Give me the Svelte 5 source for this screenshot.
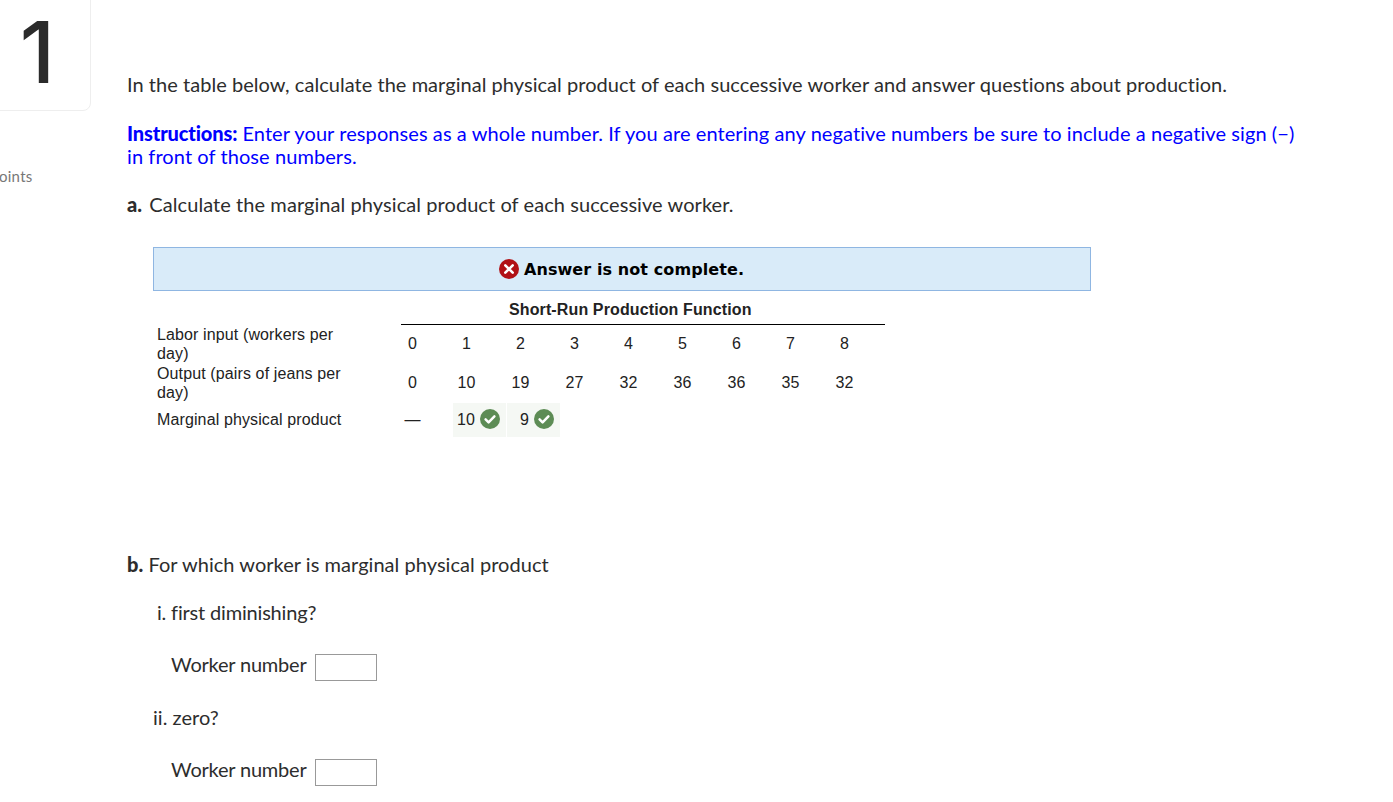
<script>
  const labor = [0, 1, 2, 3, 4, 5, 6, 7, 8];
  const output = [0, 10, 19, 27, 32, 36, 36, 35, 32];
</script>

<div class="page">
  <aside class="side">
    <div class="num-card"><span>1</span></div>
    <div class="points">Points</div>
  </aside>

  <main class="question">
    <p class="intro">In the table below, calculate the marginal physical product of each successive worker and answer questions about production.</p>
    <p class="instructions"><b>Instructions:</b> Enter your responses as a whole number. If you are entering any negative numbers be sure to include a negative sign (−) in front of those numbers.</p>
    <p class="part-a"><b>a.</b> Calculate the marginal physical product of each successive worker.</p>

    <div class="alert">
      <svg class="x-icon" viewBox="0 0 20 20" width="20" height="20">
        <circle cx="10" cy="10" r="10" fill="#b11116" />
        <path d="M6.3 6.3l7.4 7.4M13.7 6.3l-7.4 7.4" stroke="#fff" stroke-width="2.6" stroke-linecap="round" />
      </svg>
      <strong>Answer is not complete.</strong>
    </div>

    <div class="table">
      <div class="caption">Short-Run Production Function</div>
      <div class="rule"></div>

      <div class="label">Labor input (workers per day)</div>
      {#each labor as n}
        <div class="val tall">{n}</div>
      {/each}

      <div class="label">Output (pairs of jeans per day)</div>
      {#each output as n}
        <div class="val tall">{n}</div>
      {/each}

      <div class="label">Marginal physical product</div>
      <div class="val">—</div>
      {#each [10, 9] as n}
        <div class="val answer">
          <span>{n}</span>
          <svg viewBox="0 0 20 20" width="20" height="20">
            <circle cx="10" cy="10" r="10" fill="#5d8c55" />
            <path d="M5.6 10.4l3 3 5.8-6" fill="none" stroke="#fff" stroke-width="2.5" stroke-linecap="round" stroke-linejoin="round" />
          </svg>
        </div>
      {/each}
    </div>

    <p class="part-b"><b>b.</b> For which worker is marginal physical product</p>
    <p class="sub first">i. first diminishing?</p>
    <div class="worker">Worker number <input type="text" /></div>
    <p class="sub second">ii. zero?</p>
    <div class="worker last">Worker number <input type="text" /></div>
  </main>
</div>

<style>
  :global(body) {
    margin: 0;
    background: #fff;
    overflow: hidden;
  }

  .page {
    display: flex;
    width: 1393px;
    height: 802px;
    overflow: hidden;
    font-family: Lato, "Liberation Sans", sans-serif;
    font-size: 20px;
    letter-spacing: 0.04px;
    color: #2d2d2d;
  }

  .side {
    flex: 0 0 127px;
    overflow: hidden;
  }
  .num-card {
    width: 111px;
    height: 121px;
    margin: -10px 0 0 -20px;
    box-sizing: border-box;
    border: 1px solid #eeeeee;
    border-radius: 8px;
    display: flex;
    justify-content: center;
    align-items: center;
    padding: 3px 0 0 4px;
    font-family: Inter, sans-serif;
    font-size: 85px;
    font-weight: 500;
    line-height: 1;
    letter-spacing: 0;
    color: #2b2b2b;
  }
  .points {
    margin: 56px 0 0 -10px;
    font-size: 15px;
    letter-spacing: 0.3px;
    color: #777;
  }

  .question {
    flex: 1;
    padding-right: 90px;
  }
  p {
    margin: 0;
  }
  .intro {
    margin-top: 73px;
    line-height: 23px;
  }
  .instructions {
    margin-top: 26px;
    line-height: 23px;
    letter-spacing: 0.08px;
    color: #0000ff;
  }
  .instructions b {
    letter-spacing: -0.13px;
  }
  .instructions b,
  .part-a b,
  .part-b b {
    font-weight: 900;
  }
  .part-a {
    margin-top: 25px;
    line-height: 23px;
    letter-spacing: 0.07px;
  }
  .part-a b {
    margin-right: 2px;
  }

  .alert {
    margin: 31px 0 0 26px;
    width: 938px;
    height: 44px;
    box-sizing: border-box;
    background: #d9ebf9;
    border: 1px solid #8fb6e2;
    display: flex;
    justify-content: center;
    align-items: center;
    gap: 5px;
    padding-right: 1px;
    font-family: "DejaVu Sans", sans-serif;
    font-size: 16px;
    letter-spacing: 0.09px;
    color: #000;
  }
  .alert strong {
    font-weight: 700;
  }

  .table {
    display: grid;
    grid-template-columns: 228.5px repeat(9, 54px);
    margin-left: 30px;
    font-family: "Liberation Sans", Arial, sans-serif;
    font-size: 16px;
    letter-spacing: 0.12px;
    line-height: 19px;
    color: #222;
  }
  .caption {
    grid-column: 1 / -1;
    margin: 9px 0 0 0;
    padding-left: 352px;
    height: 24px;
    font-weight: 700;
  }
  .rule {
    grid-column: 1 / -1;
    margin-left: 244px;
    margin-right: -13.5px;
    margin-bottom: -1px;
    border-top: 1px solid #000;
    height: 0;
  }
  .label {
    width: 196px;
    align-self: center;
  }
  .val {
    display: flex;
    justify-content: center;
    align-items: center;
    height: 34px;
  }
  .val.tall {
    height: 39px;
  }
  .answer {
    box-sizing: border-box;
    background: #f5f8f4;
    justify-content: flex-end;
    gap: 5px;
    margin: 1px -12.5px 0 13.5px;
    padding: 0 6px 2px 0;
  }

  .part-b {
    margin-top: 116px;
    line-height: 23px;
  }
  .sub {
    line-height: 23px;
  }
  .first {
    margin: 25px 0 0 30px;
    letter-spacing: -0.18px;
  }
  .second {
    margin: 25px 0 0 26px;
  }
  .worker {
    margin: 29px 0 0 44px;
    display: flex;
    align-items: flex-start;
    gap: 8px;
    line-height: 23px;
    letter-spacing: -0.2px;
  }
  input {
    width: 62px;
    height: 27px;
    box-sizing: border-box;
    border: 1px solid #999;
    background: #fff;
    padding: 0;
    margin: 1px 0 0;
  }
</style>
